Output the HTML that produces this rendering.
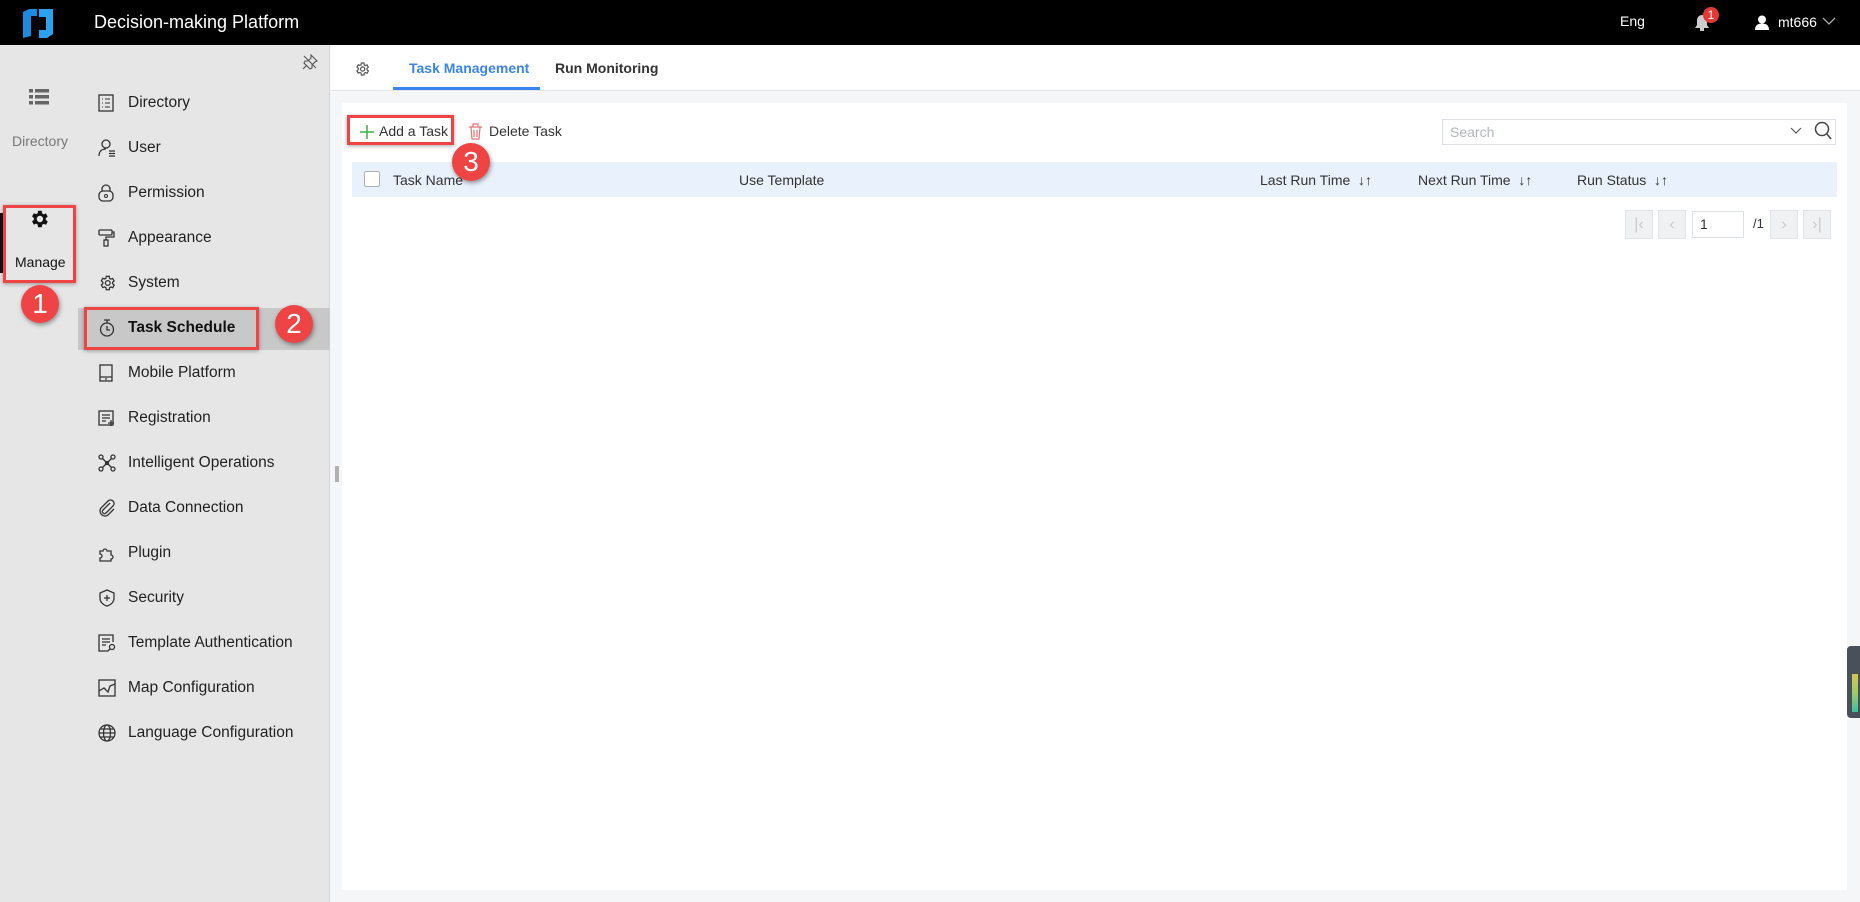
<!DOCTYPE html>
<html><head><meta charset="utf-8"><style>
*{margin:0;padding:0;box-sizing:border-box}
body{width:1860px;height:902px;overflow:hidden;font-family:"Liberation Sans",Arial,sans-serif;background:#f5f6f8;position:relative;color:#333}
.abs{position:absolute}
.hdr{left:0;top:0;width:1860px;height:45px;background:#000}
.side{left:0;top:45px;width:330px;height:857px;background:#e6e6e6;border-right:1px solid #d5d5d5}
.mi{position:absolute;left:98px;font-size:15.5px;color:#222;height:20px;line-height:20px}
.mi svg{position:absolute;left:0;top:1px}
.mi span{position:absolute;left:30px;white-space:nowrap}
.redbox{position:absolute;border:3px solid #ef4444;box-shadow:0 1px 4px rgba(0,0,0,.35)}
.circ{position:absolute;width:38px;height:38px;border-radius:50%;background:#ef4444;color:#fff;font-size:28px;text-align:center;line-height:38px;box-shadow:1px 2px 5px rgba(0,0,0,.4)}
.th{position:absolute;top:172px;font-size:14px;color:#333}
.pb{position:absolute;top:210px;width:28px;height:29px;border:1px solid #e2e4e8;background:#f0f1f3;color:#c6c9ce;font-size:16px;text-align:center;line-height:27px}
</style></head><body>
<div class="abs hdr"></div>
<svg class="abs" style="left:21px;top:8px" width="34" height="31" viewBox="0 0 34 31"><path d="M2 4l6-3h8v7h-6v20l-8 2z" fill="#1a8be0"/><path d="M18 1h14v25l-6 4h-8v-8h7V9h-7z" fill="#2ba3f0"/></svg>
<div class="abs" style="left:94px;top:12px;color:#fff;font-size:18px">Decision-making Platform</div>
<div class="abs" style="left:1620px;top:13px;color:#fff;font-size:14px">Eng</div>
<svg class="abs" style="left:1694px;top:14px" width="16" height="17" viewBox="0 0 16 17"><path d="M8 1c3 0 5 2.5 5 5.5V11l2 3H1l2-3V6.5C3 3.5 5 1 8 1z" fill="#ccc"/><rect x="6" y="14" width="4" height="3" fill="#ccc"/></svg>
<div class="abs" style="left:1703px;top:7px;width:16px;height:16px;border-radius:50%;background:#e53935;color:#fff;font-size:12px;text-align:center;line-height:16px">1</div>
<svg class="abs" style="left:1755px;top:15px" width="14" height="15" viewBox="0 0 14 15"><circle cx="7" cy="4.5" r="4" fill="#fff"/><path d="M0 15c0-5 3-6.5 7-6.5s7 1.5 7 6.5z" fill="#fff"/></svg>
<div class="abs" style="left:1778px;top:14px;color:#fff;font-size:14px">mt666</div>
<svg class="abs" style="left:1822px;top:17px" width="14" height="9" viewBox="0 0 14 9"><path d="M1 1l6 6 6-6" stroke="#aaa" fill="none" stroke-width="1.3"/></svg>

<div class="abs side"></div>
<div class="abs" style="left:0;top:213px;width:3px;height:60px;background:#111"></div>
<svg class="abs" style="left:29px;top:89px" width="20" height="16" viewBox="0 0 20 16"><g fill="#666"><rect x="0" y="0" width="4" height="3.5"/><rect x="6" y="0" width="14" height="3.5"/><rect x="0" y="6" width="4" height="3.5"/><rect x="6" y="6" width="14" height="3.5"/><rect x="0" y="12" width="4" height="3.5"/><rect x="6" y="12" width="14" height="3.5"/></g></svg>
<div class="abs" style="left:12px;top:133px;font-size:14px;color:#777">Directory</div>
<svg class="abs" style="left:28px;top:208px" width="22" height="22" viewBox="0 0 24 24"><path fill="#111" d="M19.4 13a7.5 7.5 0 000-2l2.1-1.6-2-3.5-2.5 1a7.4 7.4 0 00-1.7-1L15 3h-4l-.4 2.7a7.4 7.4 0 00-1.7 1l-2.5-1-2 3.5L6.5 11a7.5 7.5 0 000 2l-2.1 1.6 2 3.5 2.5-1a7.4 7.4 0 001.7 1L11 21h4l.4-2.7a7.4 7.4 0 001.7-1l2.5 1 2-3.5zM13 15.5A3.5 3.5 0 1113 8.5a3.5 3.5 0 010 7z"/></svg>
<div class="abs" style="left:15px;top:254px;font-size:14px;color:#111">Manage</div>
<svg class="abs" style="left:302px;top:54px" width="16" height="16" viewBox="0 0 16 16"><path d="M9 1l6 6-2 1-3 3 0 3-2 1-6-6 1-2 3 0 3-3z M1 15l4-4 M2 2l12 12" stroke="#555" fill="none" stroke-width="1.1"/></svg>

<div class="abs" style="left:78px;top:308px;width:252px;height:42px;background:#c8c8c8"></div>

<div class="mi" style="top:93px"><svg width="16" height="18"><rect x="1" y="1" width="14" height="16" fill="none" stroke="#333" stroke-width="1.3"/><path d="M4 5h1M7 5h5M4 9h1M7 9h5M4 13h1M7 13h5" stroke="#333"/></svg><span>Directory</span></div>
<div class="mi" style="top:138px"><svg width="18" height="18"><circle cx="8" cy="5" r="4" fill="none" stroke="#333" stroke-width="1.3"/><path d="M1 17c0-5 3-7 7-7M11 12h6M11 14.5h6M11 17h6" stroke="#333" fill="none" stroke-width="1.3"/></svg><span>User</span></div>
<div class="mi" style="top:183px"><svg width="16" height="18"><rect x="1" y="7" width="14" height="10" rx="4" fill="none" stroke="#333" stroke-width="1.3"/><path d="M4 7V5a4 4 0 018 0v2" fill="none" stroke="#333" stroke-width="1.3"/><circle cx="8" cy="12" r="1.5" fill="none" stroke="#333"/></svg><span>Permission</span></div>
<div class="mi" style="top:228px"><svg width="18" height="18"><rect x="1" y="1" width="13" height="5" rx="1" fill="none" stroke="#333" stroke-width="1.3"/><path d="M14 3h2v5H8v3" fill="none" stroke="#333" stroke-width="1.3"/><rect x="6" y="11" width="4" height="6" fill="none" stroke="#333" stroke-width="1.3"/></svg><span>Appearance</span></div>
<div class="mi" style="top:273px"><svg width="18" height="18" viewBox="0 0 24 24"><path fill="none" stroke="#333" stroke-width="1.7" d="M19.4 13a7.5 7.5 0 000-2l2.1-1.6-2-3.5-2.5 1a7.4 7.4 0 00-1.7-1L15 3h-4l-.4 2.7a7.4 7.4 0 00-1.7 1l-2.5-1-2 3.5L6.5 11a7.5 7.5 0 000 2l-2.1 1.6 2 3.5 2.5-1a7.4 7.4 0 001.7 1L11 21h4l.4-2.7a7.4 7.4 0 001.7-1l2.5 1 2-3.5z"/><circle cx="13" cy="12" r="3.2" fill="none" stroke="#333" stroke-width="1.7"/></svg><span>System</span></div>
<div class="mi" style="top:318px"><svg width="18" height="18"><circle cx="9" cy="10.5" r="6.5" fill="none" stroke="#333" stroke-width="1.3"/><path d="M6 1h6M9 1v3M9 7v4h3" fill="none" stroke="#333" stroke-width="1.3"/></svg><span style="font-weight:bold;color:#111">Task Schedule</span></div>
<div class="mi" style="top:363px"><svg width="16" height="18"><rect x="2" y="1" width="12" height="16" fill="none" stroke="#333" stroke-width="1.3"/><path d="M2 13h12M7 15h2" stroke="#333" stroke-width="1.3"/></svg><span>Mobile Platform</span></div>
<div class="mi" style="top:408px"><svg width="18" height="18"><rect x="1" y="2" width="14" height="14" fill="none" stroke="#333" stroke-width="1.3"/><path d="M4 6h8M4 9h8M4 12h4M13 11v6M10 14h6" stroke="#333" stroke-width="1.3"/></svg><span>Registration</span></div>
<div class="mi" style="top:453px"><svg width="18" height="18"><g fill="none" stroke="#333" stroke-width="1.3"><circle cx="3" cy="3" r="2"/><circle cx="15" cy="3" r="2"/><circle cx="3" cy="15" r="2"/><circle cx="15" cy="15" r="2"/><path d="M4.5 4.5l9 9M13.5 4.5l-9 9"/><circle cx="9" cy="9" r="1.5"/></g></svg><span>Intelligent Operations</span></div>
<div class="mi" style="top:498px"><svg width="18" height="18"><path d="M12 4l-7 7a2 2 0 003 3l7-7a3.5 3.5 0 00-5-5l-7 7a5 5 0 007 7l6-6" fill="none" stroke="#333" stroke-width="1.3"/></svg><span>Data Connection</span></div>
<div class="mi" style="top:543px"><svg width="18" height="18"><path d="M2 7h3a2 2 0 114 0h4v4a2 2 0 110 4v2H2v-3a2 2 0 100-4z" fill="none" stroke="#333" stroke-width="1.3"/></svg><span>Plugin</span></div>
<div class="mi" style="top:588px"><svg width="18" height="18"><path d="M9 1l7 3v5c0 4-3 7-7 8-4-1-7-4-7-8V4z" fill="none" stroke="#333" stroke-width="1.3"/><path d="M9 6v6M6 9h6" stroke="#333" stroke-width="1.3"/></svg><span>Security</span></div>
<div class="mi" style="top:633px"><svg width="18" height="18"><path d="M15 8V1H1v16h9" fill="none" stroke="#333" stroke-width="1.3"/><path d="M4 5h8M4 8h8M4 11h4" stroke="#333" stroke-width="1.3"/><circle cx="14" cy="13" r="2.5" fill="none" stroke="#333" stroke-width="1.3"/><path d="M12 15l-2 2" stroke="#333" stroke-width="1.3"/></svg><span>Template Authentication</span></div>
<div class="mi" style="top:678px"><svg width="18" height="18"><rect x="1" y="1" width="16" height="16" fill="none" stroke="#333" stroke-width="1.3"/><path d="M1 12l5-3 4 4 2-6 5-2" fill="none" stroke="#333" stroke-width="1.3"/></svg><span>Map Configuration</span></div>
<div class="mi" style="top:723px"><svg width="18" height="18"><g fill="none" stroke="#333" stroke-width="1.3"><circle cx="9" cy="9" r="8"/><ellipse cx="9" cy="9" rx="3.5" ry="8"/><path d="M1 9h16M2.5 5h13M2.5 13h13"/></g></svg><span>Language Configuration</span></div>

<div class="abs" style="left:335px;top:466px;width:4px;height:16px;background-image:radial-gradient(#999 0.8px,transparent 1px);background-size:2px 2px"></div>

<div class="abs" style="left:331px;top:45px;width:1529px;height:46px;background:#fff;border-bottom:1px solid #e3e5e8"></div>
<svg class="abs" style="left:354px;top:61px" width="16" height="16" viewBox="0 0 24 24"><path fill="none" stroke="#555" stroke-width="1.8" d="M19.4 13a7.5 7.5 0 000-2l2.1-1.6-2-3.5-2.5 1a7.4 7.4 0 00-1.7-1L15 3h-4l-.4 2.7a7.4 7.4 0 00-1.7 1l-2.5-1-2 3.5L6.5 11a7.5 7.5 0 000 2l-2.1 1.6 2 3.5 2.5-1a7.4 7.4 0 001.7 1L11 21h4l.4-2.7a7.4 7.4 0 001.7-1l2.5 1 2-3.5z"/><circle cx="13" cy="12" r="3.2" fill="none" stroke="#555" stroke-width="1.8"/></svg>
<div class="abs" style="left:409px;top:60px;font-size:14px;font-weight:bold;color:#3a84f0">Task Management</div>
<div class="abs" style="left:393px;top:87px;width:147px;height:3px;background:#3a84f0"></div>
<div class="abs" style="left:555px;top:60px;font-size:14px;font-weight:bold;color:#333">Run Monitoring</div>

<div class="abs" style="left:342px;top:103px;width:1505px;height:787px;background:#fff"></div>
<svg class="abs" style="left:360px;top:125px" width="14" height="14"><path d="M7 0v14M0 7h14" stroke="#3cb04a" stroke-width="1.5"/></svg>
<div class="abs" style="left:379px;top:123px;font-size:14px;color:#333">Add a Task</div>
<svg class="abs" style="left:468px;top:123px" width="15" height="17"><g fill="none" stroke="#e57373" stroke-width="1.2"><path d="M1 4h13M5 4V1h5v3M3 4l1 12h7l1-12M6 7v7M9 7v7"/></g></svg>
<div class="abs" style="left:489px;top:123px;font-size:14px;color:#333">Delete Task</div>
<div class="abs" style="left:1442px;top:119px;width:394px;height:26px;border:1px solid #dcdfe4;background:#fff"></div>
<div class="abs" style="left:1450px;top:124px;font-size:14px;color:#b0b4ba">Search</div>
<svg class="abs" style="left:1790px;top:127px" width="12" height="8"><path d="M1 1l5 5 5-5" stroke="#555" fill="none" stroke-width="1.2"/></svg>
<svg class="abs" style="left:1814px;top:121px" width="18" height="19"><circle cx="8" cy="8" r="6.5" fill="none" stroke="#444" stroke-width="1.5"/><path d="M13 13l4 5" stroke="#444" stroke-width="1.5"/></svg>

<div class="abs" style="left:352px;top:162px;width:1485px;height:35px;background:#e9f1fc"></div>
<div class="abs" style="left:364px;top:171px;width:16px;height:16px;border:1px solid #aab0b8;background:#fff;border-radius:2px"></div>
<div class="th" style="left:393px">Task Name</div>
<div class="th" style="left:739px">Use Template</div>
<div class="th" style="left:1260px">Last Run Time &nbsp;<b>↓↑</b></div>
<div class="th" style="left:1418px">Next Run Time &nbsp;<b>↓↑</b></div>
<div class="th" style="left:1577px">Run Status &nbsp;<b>↓↑</b></div>

<div class="pb" style="left:1625px">|&lsaquo;</div>
<div class="pb" style="left:1658px">&lsaquo;</div>
<div class="abs" style="left:1692px;top:211px;width:52px;height:27px;border:1px solid #dcdfe4;background:#fff;font-size:14px;line-height:25px;padding-left:7px">1</div>
<div class="abs" style="left:1753px;top:216px;font-size:13px;color:#333">/1</div>
<div class="pb" style="left:1770px">&rsaquo;</div>
<div class="pb" style="left:1803px">&rsaquo;|</div>

<div class="abs" style="left:1847px;top:646px;width:13px;height:72px;background:#4a505a;border-radius:4px 0 0 4px"></div>
<div class="abs" style="left:1852px;top:674px;width:6px;height:38px;background:linear-gradient(#d8c250,#9ccc65,#3cc0a0)"></div>

<div class="redbox" style="left:3px;top:205px;width:73px;height:78px"></div>
<div class="circ" style="left:21px;top:285px">1</div>
<div class="redbox" style="left:84px;top:307px;width:175px;height:43px"></div>
<div class="circ" style="left:275px;top:305px">2</div>
<div class="redbox" style="left:347px;top:115px;width:107px;height:30px"></div>
<div class="circ" style="left:452px;top:143px">3</div>
</body></html>
